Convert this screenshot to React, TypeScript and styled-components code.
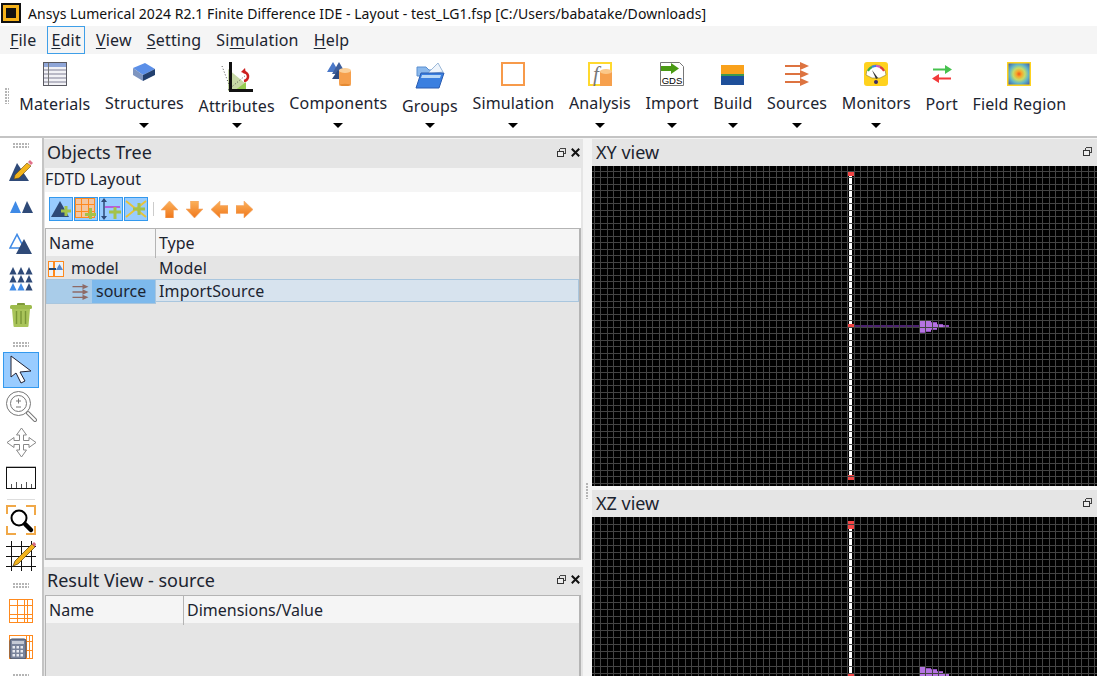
import * as React from 'react'
import styled, { createGlobalStyle } from 'styled-components'

const GlobalStyle = createGlobalStyle`
  html, body { margin: 0; padding: 0; background: #f5f5f5; overflow: hidden; }
  * { box-sizing: border-box; }
  u { text-underline-offset: 2px; text-decoration-thickness: 1px; }
`

const Page = styled.div`
  width: 1097px;
  height: 676px;
  overflow: hidden;
  display: flex;
  flex-direction: column;
  font-family: "Noto Sans", "Open Sans", sans-serif;
  font-size: 16px;
  color: #1c2430;
`

const TitleBar = styled.div`
  height: 26px;
  flex: none;
  background: #fff;
  display: flex;
  align-items: center;
  gap: 7px;
  padding-left: 1px;
  font-size: 14px;
  letter-spacing: .05px;
  color: #111;
  white-space: nowrap;
`

const MenuBar = styled.div`
  height: 28px;
  flex: none;
  background: #f5f5f5;
  display: flex;
  gap: 7px;
  padding-left: 6px;
  letter-spacing: .2px;
`

const MenuItem = styled.div<{ $focus?: boolean }>`
  height: 28px;
  line-height: 27px;
  padding: 0 3px;
  border: 1px solid ${p => (p.$focus ? '#3f9fe8' : 'transparent')};
  white-space: nowrap;
`

const ToolBar = styled.div`
  height: 84px;
  flex: none;
  background: #fff;
  border-bottom: 2px solid #c4c4c4;
  display: flex;
  align-items: stretch;
  padding-left: 5px;
`

const GripH = styled.div`
  width: 4px;
  height: 16px;
  margin: 34px 3px 0 0;
  background: radial-gradient(circle at 1px 1px, #b5b5b5 0.8px, transparent 1px) 0 0 / 3px 3px;
`

const ToolItem = styled.div`
  height: 82px;
  padding: 8px 7.3px 0;
  display: flex;
  flex-direction: column;
  align-items: center;
`

const ToolIcon = styled.div<{ $h: number }>`
  height: ${p => p.$h}px;
  display: flex;
  align-items: flex-start;
  justify-content: center;
  flex: none;
`

const ToolLabel = styled.div`
  line-height: 22px;
  margin-top: 7px;
  letter-spacing: .15px;
  white-space: nowrap;
`

const ToolArrow = styled.div`
  margin-top: auto;
  margin-bottom: 8px;
  width: 0;
  height: 0;
  border-left: 5px solid transparent;
  border-right: 5px solid transparent;
  border-top: 5px solid #000;
`

const Main = styled.div`
  flex: 1;
  min-height: 0;
  display: flex;
  background: #f5f5f5;
`

const SideBar = styled.div`
  width: 44px;
  flex: none;
  background: #fff;
  border-right: 2px solid #c4c4c4;
  display: flex;
  flex-direction: column;
  align-items: center;
`

const GripV = styled.div<{ $first?: boolean }>`
  width: 16px;
  height: 6px;
  flex: none;
  margin: ${p => (p.$first ? 5 : 9)}px 0 4px;
  background: radial-gradient(circle at 1px 1px, #b5b5b5 0.8px, transparent 1px) 0 0 / 3px 3px;
`

const SideSlot = styled.div<{ $active?: boolean }>`
  width: 36px;
  height: 36px;
  flex: none;
  display: flex;
  align-items: center;
  justify-content: center;
  background: ${p => (p.$active ? '#99ccff' : 'transparent')};
  border: 1px solid ${p => (p.$active ? '#3399ee' : 'transparent')};
`

const SideRule = styled.div`
  width: 28px;
  height: 1px;
  margin: 3px 0 2px;
  background: #ddd;
  flex: none;
`

const LeftColumn = styled.div`
  width: 539px;
  flex: none;
  display: flex;
  flex-direction: column;
  padding-top: 1px;
`

const Dock = styled.div<{ $grow?: boolean }>`
  background: #e5e5e5;
  display: flex;
  flex-direction: column;
  padding-left: 1px;
  height: ${p => (p.$grow ? '421px' : 'auto')};
  flex: ${p => (p.$grow ? 'none' : '1')};
  min-height: 0;
`

const DockHeader = styled.div<{ $h: number }>`
  height: ${p => p.$h}px;
  flex: none;
  display: flex;
  align-items: center;
  justify-content: space-between;
  padding: 0 3px 3px 2px;
  font-size: 18px;
  color: #1c2430;
`

const HeaderButtons = styled.div`
  display: flex;
  align-items: center;
  gap: 5px;
`

const SubHeader = styled.div`
  height: 24px;
  flex: none;
  background: #f5f5f5;
  line-height: 23px;
  margin-right: 2px;
  letter-spacing: .1px;
`

const TreeTools = styled.div`
  height: 36px;
  flex: none;
  background: #fff;
  margin-right: 2px;
  display: flex;
  align-items: center;
  padding: 0 0 2px 4px;
  gap: 1px;
`

const TreeToolButton = styled.div`
  width: 24px;
  height: 24px;
  background: #99ccff;
  border: 1px solid #3399ee;
  display: flex;
  align-items: center;
  justify-content: center;
`

const TreeToolRule = styled.div`
  width: 1px;
  height: 14px;
  background: #ccc;
  margin: 0 2px 0 4px;
`

const ArrowButton = styled.div`
  width: 24px;
  display: flex;
  justify-content: center;
`

const Table = styled.div<{ $grow?: boolean }>`
  margin: 0 2px 0 0;
  border: 1px solid #b4b4b4;
  border-right-width: 2px;
  background: #e5e5e5;
  flex: 1;
  min-height: 0;
  ${p => (p.$grow ? 'border-bottom-width: 2px;' : 'border-bottom: none;')}
`

const HeaderRow = styled.div<{ $first: number }>`
  height: 27px;
  background: #f5f5f5;
  display: grid;
  grid-template-columns: ${p => p.$first}px 1fr;
  line-height: 29px;
`

const HeaderCell = styled.div<{ $sep?: boolean }>`
  padding-left: 3px;
  border-right: ${p => (p.$sep ? '1px solid #b4b4b4' : 'none')};
  white-space: nowrap;
`

const TreeRow = styled.div<{ $selected?: boolean }>`
  height: 23px;
  display: grid;
  grid-template-columns: 110px 1fr;
  line-height: 25px;
  ${p => (p.$selected ? 'box-shadow: inset 0 0 0 1px #a9c6de; background: #d7e3ee;' : '')}
`

const NameCell = styled.div<{ $selected?: boolean }>`
  display: flex;
  align-items: center;
  gap: ${p => (p.$selected ? 0 : 7)}px;
  padding-left: ${p => (p.$selected ? 0 : 2)}px;
  background: ${p =>
    p.$selected ? 'linear-gradient(90deg, #a9cce9 0, #a9cce9 46px, #7db9ec 46px)' : 'transparent'};
  box-shadow: ${p => (p.$selected ? 'inset 0 0 0 1px #a9c6de' : 'none')};
`

const Indent = styled.div`
  width: 46px;
  flex: none;
  display: flex;
  justify-content: flex-end;
  padding-right: 3px;
  padding-top: 1px;
`

const NameText = styled.span<{ $selected?: boolean }>`
  padding-left: ${p => (p.$selected ? 4 : 0)}px;
`

const TypeCell = styled.div`
  padding-left: 3px;
  letter-spacing: .15px;
  white-space: nowrap;
`

const DockGap = styled.div`
  height: 7px;
  flex: none;
`

const ViewColumn = styled.div`
  flex: 1;
  min-width: 0;
  padding-left: 9px;
  padding-top: 1px;
  display: flex;
  flex-direction: column;
  position: relative;
`

const Splitter = styled.div`
  position: absolute;
  left: 3px;
  top: 345px;
  width: 3px;
  height: 16px;
  background: radial-gradient(circle at 1px 1px, #b5b5b5 0.8px, transparent 1px) 0 0 / 3px 3px;
`

const ViewHeader = styled.div`
  height: 27px;
  flex: none;
  background: #e5e5e5;
  display: flex;
  align-items: center;
  justify-content: space-between;
  padding: 0 5px 2px 4px;
  font-size: 18px;
`

const ViewCanvas = styled.svg`
  display: block;
  flex: none;
  background: #000;
`

const ViewGap = styled.div`
  height: 4px;
  flex: none;
`

function RestoreIcon () {
  return (
    <svg width="9" height="9" viewBox="0 0 9 9" shapeRendering="crispEdges">
      <path d="M2.5 .5h6v5h-2" fill="none" stroke="#444" />
      <path d="M2.5 .5v2" fill="none" stroke="#444" />
      <rect x=".5" y="3.5" width="6" height="5" fill="#fff" fillOpacity=".3" stroke="#333" />
      <path d="M0 3.5h7" stroke="#333" />
    </svg>
  )
}

function CloseIcon () {
  return (
    <svg width="9" height="9" viewBox="0 0 9 9">
      <path d="M.8.8l7.4 7.4M8.2.8L.8 8.2" stroke="#111" strokeWidth="2" />
    </svg>
  )
}

function LogoIcon () {
  return (
    <svg width="20" height="20" viewBox="0 0 20 20" shapeRendering="crispEdges">
      <rect width="20" height="20" fill="#111" />
      <rect x="3.5" y="3.5" width="13" height="13" fill="#111" stroke="#f5b21a" strokeWidth="3" />
    </svg>
  )
}

function MaterialsIcon () {
  return (
    <svg width="24" height="24" viewBox="0 0 24 24" shapeRendering="crispEdges">
      <rect width="24" height="24" fill="#5a5a62" />
      <rect x="1" y="1" width="22" height="4" fill="#8fa6d8" />
      <rect x="1" y="5" width="22" height="18" fill="#f2f2f6" />
      {[7, 11, 15, 19].map(y => <rect key={y} x="1" y={y} width="22" height="2" fill="#b9b9c6" />)}
      <rect x="5" y="1" width="1" height="22" fill="#777" />
    </svg>
  )
}

function StructuresIcon () {
  return (
    <svg width="24" height="20" viewBox="0 0 24 20">
      <path d="M1 6L13 1l10 6-12 6z" fill="#5b8fe8" />
      <path d="M1 6v7l10 6v-6z" fill="#7e95c0" />
      <path d="M11 13v6l12-6V7z" fill="#23406f" />
    </svg>
  )
}

function AttributesIcon () {
  return (
    <svg width="32" height="30" viewBox="0 0 32 30" style={{ overflow: 'visible' }}>
      <path d="M7 7l18 15v7H7z" fill="#c7d8a6" />
      <path d="M13 29l12-9v9z" fill="#96cc50" />
      <path d="M1 4l9 24M7 28l18-15" stroke="#555" strokeDasharray="1 2" fill="none" />
      <rect x="8" y="0" width="3" height="29" fill="#111" />
      <rect x="8" y="27" width="24" height="3" fill="#111" />
      <path d="M22 10a4.5 4.5 0 1 1 1 9" fill="none" stroke="#cc1f1f" strokeWidth="2.6" />
      <path d="M24 6l-4 4 5 2z" fill="#cc1f1f" />
    </svg>
  )
}

function ComponentsIcon () {
  return (
    <svg width="25" height="24" viewBox="0 0 25 24">
      <path d="M7 0l6 10H1z" fill="#4a78c8" />
      <path d="M13 0l7 12H6z" fill="#3e5f9c" />
      <path d="M6 17l6-9 6 9z" fill="#2d4a80" />
      <rect x="13" y="8" width="12" height="15" rx="1" fill="#f6a04d" />
      <ellipse cx="19" cy="8.5" rx="6" ry="2.5" fill="#fbd09a" />
      <ellipse cx="19" cy="23" rx="6" ry="1.2" fill="#e58a32" />
    </svg>
  )
}

function GroupsIcon () {
  return (
    <svg width="30" height="28" viewBox="0 0 30 28">
      <path d="M2 5h9l3 3h11v6H2z" fill="#8ab8ec" stroke="#5b8fd0" />
      <path d="M12 12L23 1l5 9z" fill="#eef4fb" stroke="#9bb8d8" />
      <path d="M6 11h23l-5 15H1z" fill="#3a7fe0" stroke="#2a5cb0" />
      <path d="M7 13h19l-1 3H6z" fill="#b8d8f8" />
    </svg>
  )
}

function SimulationIcon () {
  return (
    <svg width="24" height="24" viewBox="0 0 24 24" shapeRendering="crispEdges">
      <rect x="1" y="1" width="22" height="22" fill="#fff" stroke="#f79a4a" strokeWidth="2" />
    </svg>
  )
}

function AnalysisIcon () {
  return (
    <svg width="24" height="24" viewBox="0 0 24 24">
      <rect x="1" y="1" width="22" height="22" fill="#fff" stroke="#ffd92e" strokeWidth="2" />
      <text x="5" y="19" fontFamily="Liberation Serif, serif" fontStyle="italic" fontSize="21" fill="#777">f</text>
      <rect x="12" y="9" width="12" height="15" fill="#f6a04d" />
      <ellipse cx="18" cy="9.5" rx="6" ry="2.4" fill="#fbc88a" />
    </svg>
  )
}

function ImportIcon () {
  return (
    <svg width="24" height="24" viewBox="0 0 24 24">
      <path d="M.5.5h19l4 4v19H.5z" fill="#fff" stroke="#777" />
      <path d="M1 4h10V1l8 5.500L11 12V9H1z" fill="#4a9a14" />
      <text x="12" y="22" textAnchor="middle" fontFamily="Liberation Sans, sans-serif" fontSize="9.500" fill="#000">GDS</text>
    </svg>
  )
}

function BuildIcon () {
  return (
    <svg width="23" height="20" viewBox="0 0 23 20" shapeRendering="crispEdges" style={{ marginTop: 3 }}>
      <rect width="23" height="9" fill="#f9a11b" />
      <rect y="9" width="23" height="2" fill="#3e9a4e" />
      <rect y="11" width="23" height="9" fill="#1e4f9a" />
    </svg>
  )
}

function SourcesArrows ({ color = '#dd7340', opacity = 1 }: { color?: string; opacity?: number }) {
  return (
    <g fill={color} opacity={opacity}>
      {[4, 12, 20].map(y => <path key={y} d={`M0 ${y - 1}h15v-3l9 4-9 4v-3H0z`} />)}
    </g>
  )
}

function SourcesIcon () {
  return (
    <svg width="24" height="24" viewBox="0 0 24 24"><SourcesArrows /></svg>
  )
}

function MonitorsIcon () {
  return (
    <svg width="24" height="24" viewBox="0 0 24 24">
      <rect width="24" height="24" rx="3" fill="#ffd21e" />
      <path d="M2 13a10 10 0 0 1 20 0l-6 3H8z" fill="#fff" stroke="#8a7a30" strokeWidth=".6" />
      <path d="M4 9A9 9 0 0 1 8 5" stroke="#3fae49" strokeWidth="2" fill="none" />
      <path d="M8 5a9 9 0 0 1 4-1" stroke="#3f7fe0" strokeWidth="2" fill="none" />
      <path d="M12 4a9 9 0 0 1 4 1" stroke="#d05ac0" strokeWidth="2" fill="none" />
      <path d="M16 5a9 9 0 0 1 4 4" stroke="#e23b3b" strokeWidth="2" fill="none" />
      <path d="M8 8l6 8-2 1z" fill="#333" />
      <circle cx="12" cy="20" r="2" fill="#3a2a6a" />
    </svg>
  )
}

function PortIcon () {
  return (
    <svg width="20" height="18" viewBox="0 0 20 18" style={{ marginTop: 3 }}>
      <path d="M1 3.500h12V0l7 4.500-7 4.500V5.500H1z" fill="#46c24e" />
      <path d="M19 12.500H7V9l-7 4.500L7 18v-3.500h12z" fill="#f23a3a" />
    </svg>
  )
}

function FieldRegionIcon () {
  return (
    <svg width="24" height="24" viewBox="0 0 24 24">
      <defs>
        <radialGradient id="fr" r=".7">
          <stop offset="0" stopColor="#f2541b" />
          <stop offset=".18" stopColor="#f7a82b" />
          <stop offset=".38" stopColor="#c4dc6a" />
          <stop offset=".6" stopColor="#62b6c8" />
          <stop offset="1" stopColor="#3a4ea0" />
        </radialGradient>
      </defs>
      <rect x=".75" y=".75" width="22.500" height="22.500" fill="url(#fr)" stroke="#ffd21e" strokeWidth="1.500" />
    </svg>
  )
}

function TriPencilIcon () {
  return (
    <svg width="24" height="22" viewBox="0 0 24 22">
      <path d="M8 3L0 21h20z" fill="#2f4a78" />
      <path d="M6 15L18 3l4 3-12 12-5 1z" fill="#f3b41b" stroke="#6a4c10" strokeWidth=".6" />
      <path d="M19 2l2-2 3 3-2 2z" fill="#e2708a" />
    </svg>
  )
}

function TwoTrianglesIcon () {
  return (
    <svg width="23" height="12" viewBox="0 0 23 12">
      <path d="M5.500 0L11 12H0z" fill="#3f8ae6" />
      <path d="M17 0l6 12H12z" fill="#2f4a78" />
    </svg>
  )
}

function OutlineTrianglesIcon () {
  return (
    <svg width="24" height="21" viewBox="0 0 24 21">
      <path d="M8 1.500L1 15h14z" fill="none" stroke="#3f8ae6" strokeWidth="1.600" />
      <path d="M15 6l8 15H7z" fill="#2f4a78" />
    </svg>
  )
}

function TriangleGridIcon () {
  const pts = [0, 8, 16]
  return (
    <svg width="24" height="24" viewBox="0 0 24 24">
      {pts.map(y => pts.map(x => (
        <path key={`${x}-${y}`} d={`M${x + 4} ${y}l3.600 7.500H${x + .4}z`} fill={y === 16 && x < 16 ? '#3f8ae6' : '#2f4a78'} />
      )))}
    </svg>
  )
}

function TrashIcon () {
  return (
    <svg width="22" height="24" viewBox="0 0 22 24">
      <rect x="7" y="0" width="8" height="3" rx="1" fill="#7f9a3a" />
      <rect x="0" y="2" width="22" height="4" rx="1.500" fill="#9dbb4c" />
      <path d="M2 6h18l-1.500 17a1 1 0 0 1-1 1h-13a1 1 0 0 1-1-1z" fill="#a9c45a" />
      <path d="M6.500 8v13M11 8v13M15.500 8v13" stroke="#7a9636" strokeWidth="1.400" />
    </svg>
  )
}

function CursorIcon () {
  return (
    <svg width="22" height="30" viewBox="0 0 22 30">
      <path d="M1 1v21l5-4 5 10 4-2-5-9 11-1z" fill="#fff" stroke="#223" strokeWidth="1" />
    </svg>
  )
}

function ZoomLensIcon () {
  return (
    <svg width="31" height="31" viewBox="0 0 31 31" fill="none">
      <circle cx="12.500" cy="12.500" r="12" stroke="#777" />
      <circle cx="12.500" cy="12.500" r="8" stroke="#777" />
      <path d="M22 22l7 7" stroke="#777" strokeWidth="4" strokeLinecap="round" />
      <path d="M22 22l7 7" stroke="#fff" strokeWidth="2" strokeLinecap="round" />
      <path d="M10 10h5M12.500 7.500v5M10 16h5" stroke="#777" />
    </svg>
  )
}

function MoveIcon () {
  return (
    <svg width="31" height="31" viewBox="0 0 31 31">
      <path d="M15.500 1l5 7h-3v5.500h5.500v-3l7 5-7 5v-3h-5.500v5.500h3l-5 7-5-7h3v-5.500H8v3l-7-5 7-5v3h5.500V8h-3z" fill="#fff" stroke="#888" />
    </svg>
  )
}

function RulerIcon () {
  return (
    <svg width="30" height="24" viewBox="0 0 30 24" shapeRendering="crispEdges">
      <rect x="0" y="0" width="30" height="1" fill="#bbb" />
      <rect x=".5" y="1.500" width="29" height="21" fill="#fff" stroke="#111" />
      {[5, 10, 15, 20, 25].map((x, i) => <rect key={x} x={x} y={i % 2 ? 16 : 18} width="1" height={i % 2 ? 6 : 4} fill="#555" />)}
    </svg>
  )
}

function ZoomBoxIcon () {
  return (
    <svg width="30" height="30" viewBox="0 0 30 30" fill="none">
      <path d="M1 9V1h9M20 1h9v9M1 21v8h9M29 21v8h-9" stroke="#f0a848" strokeWidth="2" />
      <circle cx="13" cy="13" r="7.500" stroke="#000" strokeWidth="2" />
      <path d="M19 19l6 6" stroke="#000" strokeWidth="4.500" strokeLinecap="round" />
    </svg>
  )
}

function GridPencilIcon () {
  return (
    <svg width="30" height="30" viewBox="0 0 30 30">
      <path d="M0 5.500h30M0 15.500h30M0 25.500h30M5.500 0v30M15.500 0v30M25.500 0v30" stroke="#111" />
      <path d="M9 20L26 3l3 3-17 17-5 2z" fill="#f3b41b" stroke="#5a3d08" strokeWidth=".7" />
      <path d="M26 3l2-2 2 2-1 3z" fill="#d66a80" />
    </svg>
  )
}

function MeshIcon () {
  return (
    <svg width="24" height="24" viewBox="0 0 24 24" shapeRendering="crispEdges" fill="none">
      <rect x=".5" y=".5" width="23" height="23" fill="#fff" stroke="#ff8a1e" />
      <path d="M8.500 0v24M15.500 0v24M18.500 0v24M0 6.500h24M0 15.500h24M0 19.500h24" stroke="#ff8a1e" />
    </svg>
  )
}

function CalcIcon () {
  return (
    <svg width="24" height="24" viewBox="0 0 24 24">
      <rect x=".5" y=".5" width="23" height="23" fill="#fff" stroke="#ff8a1e" />
      <path d="M17.500 0v24M20.500 0v24M0 6.500h24M0 15.500h24" stroke="#ff8a1e" />
      <rect x="1" y="4" width="16" height="20" rx="2" fill="#79839b" stroke="#454d60" />
      <rect x="3" y="6" width="12" height="3" fill="#c5cad6" />
      {[11, 15, 19].map(y => [3.500, 7.500, 11.500].map(x => <rect key={`${x}-${y}`} x={x} y={y} width="2.500" height="2.500" fill="#e8eaf0" />))}
    </svg>
  )
}

function AddTriangleIcon () {
  return (
    <svg width="22" height="20" viewBox="0 0 22 20">
      <path d="M10 2l9 16H1z" fill="#2f4a78" />
      <path d="M11 12h10M16 7v10" stroke="#a4c24a" strokeWidth="3" />
    </svg>
  )
}

function AddMeshIcon () {
  return (
    <svg width="22" height="22" viewBox="0 0 22 22" shapeRendering="crispEdges">
      <rect x=".5" y=".5" width="19" height="19" fill="#f4c6a0" stroke="#ff8a1e" />
      <path d="M6.500 0v20M13.500 0v20M0 6.500h20M0 13.500h20" stroke="#ff8a1e" />
      <path d="M10 16h11M15.500 10v11" stroke="#a4c24a" strokeWidth="3" />
    </svg>
  )
}

function AddRulerIcon () {
  return (
    <svg width="22" height="22" viewBox="0 0 22 22">
      <path d="M4 3v16" stroke="#2f4a78" strokeWidth="1.500" />
      <path d="M4 0l3 4H1zM4 22l3-4H1z" fill="#2f4a78" />
      <path d="M5 9h15" stroke="#c03ad0" strokeWidth="1.500" />
      <path d="M9 14h12M15 9v12" stroke="#a4c24a" strokeWidth="3" />
    </svg>
  )
}

function AddCrossIcon () {
  return (
    <svg width="22" height="20" viewBox="0 0 22 20">
      <path d="M1 2l20 16M21 2L1 18" stroke="#e8c43a" strokeWidth="2" />
      <path d="M8 10h12M14 4v12" stroke="#a4c24a" strokeWidth="3" />
    </svg>
  )
}

const arrowPaths: Record<string, string> = {
  up: 'M8.500 0L17 9h-4.500v8h-8V9H0z',
  down: 'M4.500 0h8v8H17l-8.500 9L0 8h4.500z',
  left: 'M0 8.500L9 0v4.500h8v8H9V17z',
  right: 'M17 8.500L8 17v-4.500H0v-8h8V0z'
}

function MoveArrow ({ dir }: { dir: string }) {
  return (
    <svg width="17" height="17" viewBox="0 0 17 17">
      <defs>
        <linearGradient id={`ma-${dir}`} x1="0" y1="0" x2="0" y2="1">
          <stop offset="0" stopColor="#fbb25c" />
          <stop offset="1" stopColor="#f0761a" />
        </linearGradient>
      </defs>
      <path d={arrowPaths[dir]} fill={`url(#ma-${dir})`} stroke="#f3a86a" strokeWidth=".6" />
    </svg>
  )
}

function ModelIcon () {
  return (
    <svg width="16" height="16" viewBox="0 0 16 16" shapeRendering="crispEdges">
      <rect x=".5" y=".5" width="15" height="15" fill="#eef3f8" stroke="#ff8a1e" />
      <rect x="5" y="1" width="2" height="14" fill="#ff8a1e" />
      <rect x="1" y="7" width="7" height="2" fill="#24476f" />
      <path d="M8 9l3.500-6L15 9z" fill="#5a88c8" shapeRendering="auto" />
    </svg>
  )
}

function GridLines ({ w, h, ox, oy, sx, sy }: { w: number; h: number; ox: number; oy: number; sx: number; sy: number }) {
  const xs = Array.from({ length: Math.ceil(w / sx) + 1 }, (_, i) => Math.round(ox + i * sx))
  const ys = Array.from({ length: Math.ceil(h / sy) + 1 }, (_, i) => Math.round(oy + i * sy))
  return (
    <g fill="#444">
      {xs.map(x => <rect key={`x${x}`} x={x} y={0} width={1} height={h} />)}
      {ys.map(y => <rect key={`y${y}`} x={0} y={y} width={w} height={1} />)}
    </g>
  )
}

function SteppedCone ({ x, cy, steps }: { x: number; cy: number; steps: [number, number][] }) {
  return (
    <g>
      {steps.map(([half, fillHalf], i) => (
        <React.Fragment key={i}>
          <rect x={x + i * 6} y={cy - half} width={6} height={half * 2} fill="#8e4cb8" />
          <rect x={x + i * 6} y={cy - fillHalf} width={6} height={fillHalf * 2} fill="#b573e2" />
        </React.Fragment>
      ))}
    </g>
  )
}

function XYCanvas () {
  return (
    <ViewCanvas width={505} height={320} viewBox="0 0 505 320" shapeRendering="crispEdges">
      <rect x={257} y={10} width={3} height={300} fill="#fff" />
      <rect x={255} y={6} width={8} height={4} fill="#f24545" />
      <rect x={255} y={309} width={8} height={5} fill="#f24545" />
      <rect x={255} y={158} width={8} height={4} fill="#f24545" />
      <rect x={263} y={159} width={64} height={3} fill="#4b2070" />
      <SteppedCone x={327} cy={160} steps={[[6.5, 6], [6, 5], [4, 3], [2, 1], [1, 0]]} />
      <GridLines w={505} h={320} ox={1.5} oy={4.5} sx={6.5} sy={6.5} />
    </ViewCanvas>
  )
}

function XZCanvas () {
  return (
    <ViewCanvas width={505} height={159} viewBox="0 0 505 159" shapeRendering="crispEdges">
      <rect x={257} y={12} width={3} height={144} fill="#fff" />
      <rect x={255} y={4} width={8} height={8} fill="#f24545" />
      <rect x={255} y={156} width={8} height={4} fill="#f24545" />
      <SteppedCone x={327} cy={165} steps={[[16, 15], [14, 13], [13, 12], [11, 10], [9, 8]]} />
      <GridLines w={505} h={159} ox={1.5} oy={6.5} sx={6.5} sy={7.1} />
    </ViewCanvas>
  )
}

const tools: { label: string; icon: React.ReactNode; h: number; arrow?: boolean }[] = [
  { label: 'Materials', icon: <MaterialsIcon />, h: 24 },
  { label: 'Structures', icon: <StructuresIcon />, h: 23, arrow: true },
  { label: 'Attributes', icon: <AttributesIcon />, h: 26, arrow: true },
  { label: 'Components', icon: <ComponentsIcon />, h: 23, arrow: true },
  { label: 'Groups', icon: <GroupsIcon />, h: 26, arrow: true },
  { label: 'Simulation', icon: <SimulationIcon />, h: 23, arrow: true },
  { label: 'Analysis', icon: <AnalysisIcon />, h: 23, arrow: true },
  { label: 'Import', icon: <ImportIcon />, h: 23, arrow: true },
  { label: 'Build', icon: <BuildIcon />, h: 23, arrow: true },
  { label: 'Sources', icon: <SourcesIcon />, h: 23, arrow: true },
  { label: 'Monitors', icon: <MonitorsIcon />, h: 23, arrow: true },
  { label: 'Port', icon: <PortIcon />, h: 24 },
  { label: 'Field Region', icon: <FieldRegionIcon />, h: 24 }
]

export default function App () {
  return (
    <Page>
      <GlobalStyle />
      <TitleBar>
        <LogoIcon />
        Ansys Lumerical 2024 R2.1 Finite Difference IDE - Layout - test_LG1.fsp [C:/Users/babatake/Downloads]
      </TitleBar>
      <MenuBar>
        <MenuItem><u>F</u>ile</MenuItem>
        <MenuItem $focus><u>E</u>dit</MenuItem>
        <MenuItem><u>V</u>iew</MenuItem>
        <MenuItem><u>S</u>etting</MenuItem>
        <MenuItem>Si<u>m</u>ulation</MenuItem>
        <MenuItem><u>H</u>elp</MenuItem>
      </MenuBar>
      <ToolBar>
        <GripH />
        {tools.map(t => (
          <ToolItem key={t.label}>
            <ToolIcon $h={t.h}>{t.icon}</ToolIcon>
            <ToolLabel>{t.label}</ToolLabel>
            {t.arrow && <ToolArrow />}
          </ToolItem>
        ))}
      </ToolBar>
      <Main>
        <SideBar>
          <GripV $first />
          <SideSlot><TriPencilIcon /></SideSlot>
          <SideSlot><TwoTrianglesIcon /></SideSlot>
          <SideSlot><OutlineTrianglesIcon /></SideSlot>
          <SideSlot><TriangleGridIcon /></SideSlot>
          <SideSlot><TrashIcon /></SideSlot>
          <GripV />
          <SideSlot $active><CursorIcon /></SideSlot>
          <SideSlot><ZoomLensIcon /></SideSlot>
          <SideSlot><MoveIcon /></SideSlot>
          <SideSlot><RulerIcon /></SideSlot>
          <SideRule />
          <SideSlot><ZoomBoxIcon /></SideSlot>
          <SideSlot><GridPencilIcon /></SideSlot>
          <GripV />
          <SideSlot><MeshIcon /></SideSlot>
          <SideSlot><CalcIcon /></SideSlot>
          <GripV />
        </SideBar>
        <LeftColumn>
          <Dock $grow>
            <DockHeader $h={29}>
              Objects Tree
              <HeaderButtons><RestoreIcon /><CloseIcon /></HeaderButtons>
            </DockHeader>
            <SubHeader>FDTD Layout</SubHeader>
            <TreeTools>
              <TreeToolButton><AddTriangleIcon /></TreeToolButton>
              <TreeToolButton><AddMeshIcon /></TreeToolButton>
              <TreeToolButton><AddRulerIcon /></TreeToolButton>
              <TreeToolButton><AddCrossIcon /></TreeToolButton>
              <TreeToolRule />
              <ArrowButton><MoveArrow dir="up" /></ArrowButton>
              <ArrowButton><MoveArrow dir="down" /></ArrowButton>
              <ArrowButton><MoveArrow dir="left" /></ArrowButton>
              <ArrowButton><MoveArrow dir="right" /></ArrowButton>
            </TreeTools>
            <Table $grow>
              <HeaderRow $first={110}>
                <HeaderCell $sep>Name</HeaderCell>
                <HeaderCell>Type</HeaderCell>
              </HeaderRow>
              <TreeRow>
                <NameCell><ModelIcon />model</NameCell>
                <TypeCell>Model</TypeCell>
              </TreeRow>
              <TreeRow $selected>
                <NameCell $selected>
                  <Indent>
                    <svg width="17" height="16" viewBox="0 0 24 24"><SourcesArrows color="#8a5a50" opacity={0.85} /></svg>
                  </Indent>
                  <NameText $selected>source</NameText>
                </NameCell>
                <TypeCell>ImportSource</TypeCell>
              </TreeRow>
            </Table>
          </Dock>
          <DockGap />
          <Dock>
            <DockHeader $h={28}>
              Result View - source
              <HeaderButtons><RestoreIcon /><CloseIcon /></HeaderButtons>
            </DockHeader>
            <Table>
              <HeaderRow $first={138}>
                <HeaderCell $sep>Name</HeaderCell>
                <HeaderCell>Dimensions/Value</HeaderCell>
              </HeaderRow>
            </Table>
          </Dock>
        </LeftColumn>
        <ViewColumn>
          <Splitter />
          <ViewHeader>XY view<RestoreIcon /></ViewHeader>
          <XYCanvas />
          <ViewGap />
          <ViewHeader>XZ view<RestoreIcon /></ViewHeader>
          <XZCanvas />
        </ViewColumn>
      </Main>
    </Page>
  )
}
